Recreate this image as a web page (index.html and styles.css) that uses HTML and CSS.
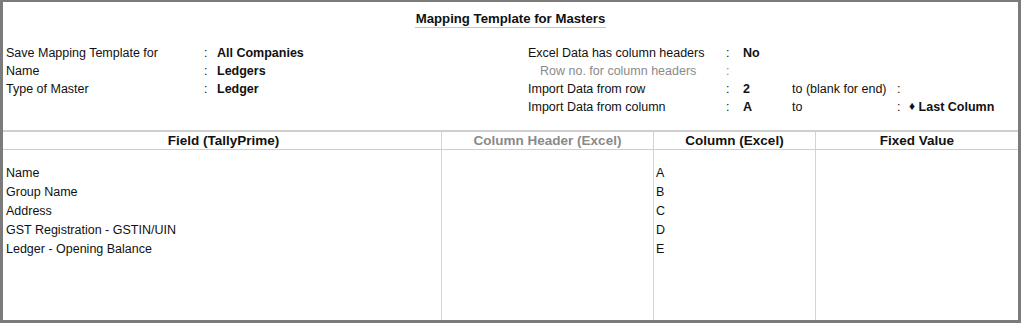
FILE: index.html
```html
<!DOCTYPE html>
<html>
<head>
<title>Mapping Template for Masters</title>
<link rel="stylesheet" href="styles.css">
</head>
<body>
<div id="screen">

  <div class="title"><span>Mapping Template for Masters</span></div>

  <div class="top">
    <div class="fields left">
      <div class="label">Save Mapping Template for</div><div class="colon">:</div><div class="value">All Companies</div>
      <div class="label">Name</div><div class="colon">:</div><div class="value">Ledgers</div>
      <div class="label">Type of Master</div><div class="colon">:</div><div class="value">Ledger</div>
    </div>

    <div class="fields right">
      <div class="label">Excel Data has column headers</div><div class="colon">:</div><div class="value">No</div><div></div><div></div><div></div>
      <div class="label sub">Row no. for column headers</div><div class="colon dim">:</div><div></div><div></div><div></div><div></div>
      <div class="label">Import Data from row</div><div class="colon">:</div><div class="value">2</div><div class="label">to (blank for end)</div><div class="colon">:</div><div></div>
      <div class="label">Import Data from column</div><div class="colon">:</div><div class="value">A</div><div class="label">to</div><div class="colon">:</div><div class="value"><span class="diamond">&#9830;</span> Last Column</div>
    </div>
  </div>

  <div class="grid">
    <div class="row head">
      <div class="col c1">Field (TallyPrime)</div>
      <div class="col c2 dim">Column Header (Excel)</div>
      <div class="col c3">Column (Excel)</div>
      <div class="col c4">Fixed Value</div>
    </div>
    <div class="row body">
      <div class="col c1">
        <div>Name</div>
        <div>Group Name</div>
        <div>Address</div>
        <div>GST Registration - GSTIN/UIN</div>
        <div>Ledger - Opening Balance</div>
      </div>
      <div class="col c2"></div>
      <div class="col c3">
        <div>A</div>
        <div>B</div>
        <div>C</div>
        <div>D</div>
        <div>E</div>
      </div>
      <div class="col c4"></div>
    </div>
  </div>

</div>
</body>
</html>
```

FILE: styles.css
```css
body {
  margin: 0;
  background-color: #fff;
  font-family: "Liberation Sans", Arial, sans-serif;
  font-size: 12.5px;
  color: #111;
}

#screen {
  box-sizing: border-box;
  width: 1021px;
  height: 323px;
  border: 2px solid #7b7b7b;
  border-left-width: 3px;
  border-right-width: 3px;
  border-bottom-width: 3px;
  display: flex;
  flex-direction: column;
}

.title {
  text-align: center;
  padding-top: 9px;
  font-size: 13.2px;
  font-weight: bold;
  line-height: 16px;
}

.title span {
  display: inline-block;
  border-bottom: 1px solid #c4c4c4;
  padding: 0 1px;
}

.top {
  display: flex;
  margin-top: 16px;
  line-height: 18px;
}

.fields {
  display: grid;
}

.left {
  margin-left: 3px;
  width: 522px;
  grid-template-columns: 198px 13px auto;
  align-content: start;
}

.right {
  grid-template-columns: 198px 17px 49px 105px 12px auto;
}

.value {
  font-weight: bold;
}

.sub {
  padding-left: 12px;
  color: #8a8a8a;
}

.dim {
  color: #8a8a8a;
}

.diamond {
  font-size: 12px;
  position: relative;
  top: -1px;
}

.grid {
  flex: 1;
  display: flex;
  flex-direction: column;
  margin-top: 14px;
  border-top: 2px solid #cfcfcf;
}

.row {
  display: flex;
}

.col {
  box-sizing: border-box;
}

.head {
  font-size: 13.5px;
  font-weight: bold;
  text-align: center;
  line-height: 17px;
  border-bottom: 1px solid #cfcfcf;
}

.body {
  flex: 1;
  line-height: 19px;
}

.body .col {
  padding-top: 14px;
}

.c1 {
  width: 438px;
  padding-left: 3px;
}

.c2 {
  width: 212px;
  border-left: 1px solid #d4d4d4;
}

.c3 {
  width: 162px;
  border-left: 1px solid #d4d4d4;
}

.body .c3 {
  padding-left: 2px;
}

.c4 {
  flex: 1;
  border-left: 1px solid #d4d4d4;
}
```
